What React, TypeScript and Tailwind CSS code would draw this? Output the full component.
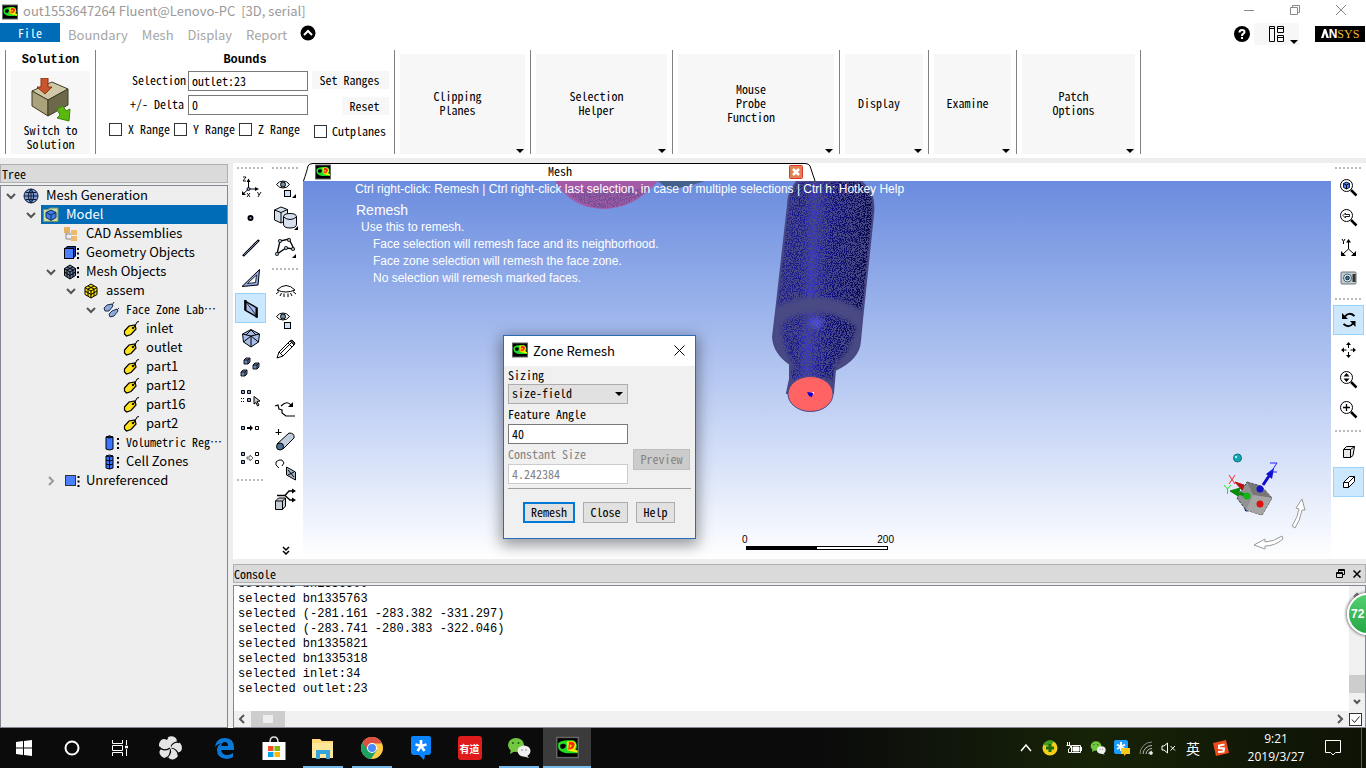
import React from "react";
import clsx from "clsx";

const mono = "font-['Noto_Sans_Mono_CJK_SC','Liberation_Mono',monospace] text-[12px] leading-[14px]";
const boldMono = "font-['Liberation_Mono',monospace] text-[12px] leading-[14px] font-bold";
const sans = "font-['Open_Sans','Noto_Sans_CJK_SC',sans-serif]";
const cjk = "font-['Noto_Sans_CJK_SC',sans-serif]";

/* ---------- small shared drawings ---------- */

function FluentIcon({ size = 16 }: { size?: number }) {
  return (
    <svg width={size} height={size} viewBox="0 0 16 16" className="shrink-0">
      <rect x="0.5" y="1" width="15" height="14" fill="#000" stroke="#666" />
      <path d="M1.500 5Q4 3 8 3H12Q14.500 4 14.500 7L14 9.500L15 10V12H7Q2 11 1.500 8Z" fill="#22dd22" />
      <path d="M7.500 4Q13 2.500 14 6Q13.500 9 12.500 9.500L15 10V11.500L8 10Z" fill="#ffee00" />
      <path d="M9 4Q13 3.500 13 6Q12.500 8.500 11 9L8.500 9.500Z" fill="#f32a12" />
      <path d="M9.500 6Q11 5.500 11 7L9.500 8.500Z" fill="#ffd400" />
      <path d="M3 6Q6 4.500 7 6.500Q6.500 9 4.500 9Q2.500 8.500 3 6Z" fill="#000" />
    </svg>
  );
}

function Caret({ className }: { className?: string }) {
  return (
    <svg width="8" height="4" viewBox="0 0 8 4" className={className}>
      <path d="M0 0H8L4 4Z" fill="#000" />
    </svg>
  );
}

function Grip() {
  return (
    <svg width="27" height="2" viewBox="0 0 27 2">
      <path d="M0 1H27" stroke="#bbb" strokeWidth="2" strokeDasharray="2 2" />
    </svg>
  );
}

/* ---------- ribbon ---------- */

function Ribbon() {
  const groups = [
    { lines: ["Clipping", "Planes"], width: "w-[136px]" },
    { lines: ["Selection", "Helper"], width: "w-[142px]" },
    { lines: ["Mouse", "Probe", "Function"], width: "w-[167px]" },
    { lines: ["Display"], width: "w-[89px]" },
    { lines: ["Examine"], width: "w-[88px]" },
    { lines: ["Patch", "Options"], width: "w-[124px]" },
  ];
  return (
    <div className={clsx("flex h-[108px] pb-1 pl-[5px]", mono)}>
      <section className="flex w-[90px] flex-col border-l border-[#808080] px-[5px]">
        <h2 className={clsx("pt-[3px] pb-1 text-center", boldMono)}>Solution</h2>
        <button className="flex flex-1 flex-col items-center justify-end bg-[#f7f7f7] pb-[3px]">
          <svg width="40" height="44" viewBox="0 0 40 44" className="mb-[1px]">
            <path d="M1 13L21 4L37 11L17 22Z" fill="#cfc8a6" stroke="#3f3b27" />
            <path d="M1 13L17 22V38L1 28Z" fill="#aaa27b" stroke="#3f3b27" />
            <path d="M17 22L37 11V27L17 38Z" fill="#6e684b" stroke="#3f3b27" />
            <path d="M10 0H17V9H21L14 16L6 9H10Z" fill="#c9552c" stroke="#8c3212" />
            <path d="M26 31L32 28L35 33L39 31L38 43L26 40L29 37Z" fill="#5ab80e" stroke="#3b850a" />
          </svg>
          <span>Switch to</span>
          <span>Solution</span>
        </button>
      </section>
      <section className="flex w-[299px] flex-col border-l border-[#808080] pr-[5px]">
        <h2 className={clsx("pt-[3px] pb-1 pl-[5px] text-center", boldMono)}>Bounds</h2>
        <div className="flex items-center">
          <label htmlFor="selection" className="w-[90px] pb-[2px] text-right">Selection</label>
          <input id="selection" defaultValue="outlet:23" className="ml-[2px] h-5 w-[120px] border border-[#7a7a7a] px-[3px] pb-[2px]" />
          <button className="mb-[2px] ml-auto h-[18px] w-[77px] bg-[#f7f7f7] pr-[2px] pb-[1px]">Set Ranges</button>
        </div>
        <div className="mt-1 flex items-center">
          <label htmlFor="delta" className="w-[90px] pr-[2px] pb-[2px] text-right">+/- Delta</label>
          <input id="delta" defaultValue="0" className="ml-[2px] h-5 w-[120px] border border-[#7a7a7a] px-[3px] pb-[2px]" />
          <button className="mt-[2px] ml-auto h-[18px] w-[47px] bg-[#f7f7f7] pr-[2px] pb-[1px]">Reset</button>
        </div>
        <div className="mt-[5px] flex items-center pl-[13px]">
          {["X Range", "Y Range", "Z Range"].map((name) => (
            <label key={name} className="flex w-[65px] items-center gap-[6px] whitespace-nowrap">
              <input type="checkbox" className="size-[13px] shrink-0 appearance-none border border-[#333] bg-white" />
              {name}
            </label>
          ))}
          <label className="mt-1 ml-auto flex items-center gap-[5px] pr-[3px]">
            <input type="checkbox" className="size-[13px] shrink-0 appearance-none border border-[#333] bg-white" />
            Cutplanes
          </label>
        </div>
      </section>
      {groups.map((g) => (
        <section key={g.lines[0]} className={clsx("flex border-l border-[#808080] px-[5px] pt-1", g.width)}>
          <button className="flex flex-1 flex-col bg-[#f7f7f7]">
            <span className="flex w-full flex-1 flex-col items-center justify-center pt-[3px] pr-[10px]">
              {g.lines.map((l) => <span key={l}>{l}</span>)}
            </span>
            <Caret className="mr-[1px] mb-[1px] self-end" />
          </button>
        </section>
      ))}
      <div className="border-l border-[#808080]" />
    </div>
  );
}

function Header() {
  return (
    <header className="bg-white">
      <div className={clsx("flex h-[23px] items-center pl-[2px] text-[13px] text-[#999]", cjk)}>
        <FluentIcon />
        <h1 className="ml-[5px] pb-[1px] whitespace-pre">out1553647264 Fluent@Lenovo-PC  [3D, serial]</h1>
        <div className="ml-auto flex gap-9 pr-5 pb-[3px]">
          <button aria-label="Minimize">
            <svg width="10" height="10"><path d="M0 5.500H10" stroke="#888" /></svg>
          </button>
          <button aria-label="Restore">
            <svg width="10" height="10" fill="none" stroke="#888"><path d="M0.500 2.500H7.500V9.500H0.500ZM2.500 2.500V0.500H9.500V7.500H7.500" /></svg>
          </button>
          <button aria-label="Close window">
            <svg width="10" height="10" stroke="#888"><path d="M0 0L10 10M10 0L0 10" /></svg>
          </button>
        </div>
      </div>
      <div className="flex h-[27px] items-start">
        <button className={clsx("h-[19px] w-[60px] bg-[#006bb7] text-white", mono)}>File</button>
        <nav className={clsx("flex gap-[14px] pt-[3px] pl-2 text-[13px] leading-[18px] text-[#a5a5a5]", cjk)}>
          {["Boundary", "Mesh", "Display", "Report"].map((m) => <a href="#" key={m}>{m}</a>)}
        </nav>
        <button aria-label="Collapse ribbon" className="mt-[2px] ml-[13px]">
          <svg width="16" height="16"><circle cx="8" cy="8" r="7.500" /><path d="M4 10L8 6L12 10" fill="none" stroke="#fff" strokeWidth="2" /></svg>
        </button>
        <div className="ml-auto flex">
          <button aria-label="Help" className="mt-[3px] mr-1 self-start">
            <svg width="16" height="16">
              <circle cx="8" cy="8" r="8" />
              <path d="M5.500 6.500Q5.500 4 8 4T10.500 6Q10.500 7 9 8Q8 8.500 8 10" fill="none" stroke="#fff" strokeWidth="2" />
              <rect x="7" y="11" width="2" height="2" fill="#fff" />
            </svg>
          </button>
          <button aria-label="Layout" className="flex h-[22px] w-[45px] items-end bg-[#f7f7f7] pb-[1px] pl-[15px]">
            <svg width="15" height="16" fill="none" stroke="#000" className="mb-[2px]">
              <path d="M0.500 0.500H5.500V15.500H0.500ZM0.500 2.500H5.500M8.500 0.500H14.500V6.500H8.500ZM8.500 2.500H14.500M8.500 9.500H14.500V15.500H8.500ZM8.500 11.500H14.500" />
            </svg>
            <Caret className="ml-[6px]" />
          </button>
          <div className="mt-[3px] mr-[1px] ml-4 h-4 w-[50px] bg-black text-center font-['Liberation_Sans',sans-serif] text-[12px] leading-4 font-bold text-white">
            <svg width="8" height="9" className="inline align-baseline"><path d="M0 9L3 0H5L8 9H5.500L4 4L2.500 9Z" fill="#fff" /></svg>
            N<span className="font-['Liberation_Serif',serif] font-normal text-[#f0b82c]">SYS</span>
          </div>
        </div>
      </div>
      <Ribbon />
    </header>
  );
}

/* ---------- tree ---------- */

const treeIcons: Record<string, React.ReactNode> = {
  globe: (
    <g fill="none" stroke="#111c33">
      <circle cx="8" cy="8" r="7" fill="#7d9bd8" />
      <path d="M1 8H15M2.500 4.500H13.500M2.500 11.500H13.500M8 1V15M8 1Q2.500 8 8 15M8 1Q13.500 8 8 15" />
    </g>
  ),
  model: (
    <g>
      <path d="M0.500 2.500H5L7 1H15V14.500H0.500Z" fill="#c9dca6" stroke="#7d9660" />
      <path d="M3 5.500L8 3L13 5.500V10.500L8 13.500L3 10.500Z" fill="#3f7fe0" stroke="#102c66" />
      <path d="M3 5.500L8 8L13 5.500M8 8V13" fill="none" stroke="#102c66" />
    </g>
  ),
  cad: (
    <g>
      <path d="M3 7V13H9M3 8H9" fill="none" stroke="#888" />
      <rect x="1" y="1" width="6" height="6" fill="#e5b063" />
      <rect x="8" y="4" width="6" height="5" fill="#edba70" />
      <rect x="8" y="10" width="6" height="5" fill="#edba70" />
    </g>
  ),
  geometry: (
    <g>
      <path d="M1.500 4L4 1.500H12.500V11L10 13.500H1.500Z" fill="#173a9a" stroke="#000" />
      <rect x="1.500" y="3.500" width="9" height="10" fill="#4a80ff" stroke="#000" />
      <path d="M15 3V14" stroke="#000" strokeWidth="2" strokeDasharray="2 2.500" />
    </g>
  ),
  mesh: (
    <g fill="none" stroke="#000">
      <path d="M1.500 4.500L7 1L12.500 4.500V11.500L7 15L1.500 11.500Z" fill="#6b7fa6" />
      <path d="M1.500 4.500L7 8L12.500 4.500M7 8V15M1.500 8L7 11.500L12.500 8M4 3L10 6V13M10 3L4 6V13" />
      <path d="M15 3V14" strokeWidth="2" strokeDasharray="2 2.500" />
    </g>
  ),
  assem: (
    <g fill="none" stroke="#000">
      <path d="M2 4.500L8 1L14 4.500V11.500L8 15L2 11.500Z" fill="#ffe000" />
      <path d="M2 4.500L8 8L14 4.500M8 8V15M2 8L8 11.500L14 8M5 3L11 6V13M11 3L5 6V13" />
    </g>
  ),
  labels: (
    <g fill="#8fa9d8" stroke="#1c2b4d">
      <path d="M1 6L4 3L9 2L10 4L6 9L2 9Z" />
      <path d="M6 12L9 9L14 7L15 9L11 14L7 15Z" />
      <path d="M9 3L11 0M14 8L16 6" />
    </g>
  ),
  tag: (
    <g fill="#ffe21a" stroke="#000">
      <path d="M1.500 10L6 5L12 4L13 8L8 13.500L3.500 15L1.500 13Z" strokeWidth="1.200" />
      <path d="M10.500 7L13 3L14 1L16 0.500" fill="none" />
      <circle cx="10" cy="7" r="0.800" fill="#000" />
    </g>
  ),
  volume: (
    <g stroke="#000">
      <path d="M3 2Q6.500 0 10 2V14Q6.500 16 3 14Z" fill="#3a76ff" />
      <path d="M3 2Q6.500 4 10 2Q6.500 0 3 2Z" fill="#16357d" />
      <path d="M15 3V14" strokeWidth="2" strokeDasharray="2 2.500" />
    </g>
  ),
  cells: (
    <g stroke="#000">
      <path d="M3 2Q6.500 0 10 2V14Q6.500 16 3 14Z" fill="#3a76ff" />
      <path d="M3 2Q6.500 4 10 2M6.500 3V15M3 6Q6.500 8 10 6M3 10Q6.500 12 10 10" fill="none" />
      <path d="M15 3V14" strokeWidth="2" strokeDasharray="2 2.500" />
    </g>
  ),
  square: (
    <g stroke="#333">
      <rect x="2.500" y="2.500" width="10" height="10" fill="#4a80ff" />
      <path d="M15.500 3V14" stroke="#000" strokeWidth="2" strokeDasharray="2 2.500" />
    </g>
  ),
};

type TreeRow = { label: string; level: number; icon: string; open?: boolean; mono?: boolean };

const rows: TreeRow[] = [
  { label: "Mesh Generation", level: 0, icon: "globe", open: true },
  { label: "Model", level: 1, icon: "model", open: true },
  { label: "CAD Assemblies", level: 2, icon: "cad" },
  { label: "Geometry Objects", level: 2, icon: "geometry" },
  { label: "Mesh Objects", level: 2, icon: "mesh", open: true },
  { label: "assem", level: 3, icon: "assem", open: true },
  { label: "Face Zone Lab…", level: 4, icon: "labels", open: true, mono: true },
  { label: "inlet", level: 5, icon: "tag" },
  { label: "outlet", level: 5, icon: "tag" },
  { label: "part1", level: 5, icon: "tag" },
  { label: "part12", level: 5, icon: "tag" },
  { label: "part16", level: 5, icon: "tag" },
  { label: "part2", level: 5, icon: "tag" },
  { label: "Volumetric Reg…", level: 4, icon: "volume", mono: true },
  { label: "Cell Zones", level: 4, icon: "cells" },
  { label: "Unreferenced", level: 2, icon: "square", open: false },
];

const indent = ["pl-0", "pl-5", "pl-10", "pl-15", "pl-20", "pl-25"];

function Tree() {
  return (
    <aside className="flex w-[228px] shrink-0 flex-col">
      <h2 className={clsx("mt-[1px] h-[19px] border border-[#b0b0b0] bg-[#dadada] pt-[2px] pl-[1px]", mono)}>Tree</h2>
      <ul lang="zh-CN" className={clsx("mt-[2px] flex-1 border border-[#828790] text-[13px] leading-[17px]", cjk)}>
        {rows.map((r) => (
          <li key={r.label} className={clsx("flex h-[19px]", indent[r.level])}>
            <span className="flex w-5 shrink-0 items-center justify-center">
              {r.open !== undefined && (
                <svg width="10" height="10" fill="none" strokeWidth="2">
                  {r.open ? <path d="M1 3L5 7L9 3" stroke="#555" /> : <path d="M3 1L7 5L3 9" stroke="#999" />}
                </svg>
              )}
            </span>
            <span className={clsx("flex flex-1 items-center whitespace-nowrap", r.label === "Model" && "bg-[#006bb7] text-white")}>
              <svg width="17" height="16" viewBox="0 0 17 16" className="mr-[6px] ml-[2px] shrink-0">{treeIcons[r.icon]}</svg>
              <span className={clsx("pb-[2px]", r.mono && mono)}>{r.label}</span>
            </span>
          </li>
        ))}
      </ul>
    </aside>
  );
}

/* ---------- tool bars ---------- */

function Tool({ name, active, children }: { name: string; active?: boolean; children: React.ReactNode }) {
  return (
    <button
      aria-label={name}
      className={clsx("flex h-[30px] w-[31px] items-center justify-center", active && "border border-[#99d1ff] bg-[#cce8ff]")}
    >
      <svg width="24" height="24" viewBox="0 0 24 24" fill="none" stroke="#000">{children}</svg>
    </button>
  );
}

const eye = (
  <>
    <path d="M2.500 8.500Q5 5 9 5T15.500 8.500Q13 12 9 12T2.500 8.500Z" />
    <circle cx="9" cy="8.500" r="2.500" fill="#6d8ca8" />
    <rect x="10.500" y="14.500" width="6" height="6" fill="#cfe0f5" />
  </>
);

function LeftTools() {
  return (
    <div className="flex w-[70px] shrink-0 gap-1 bg-white pl-[2px]">
      <div className="flex flex-col items-center">
        <div className="flex h-[10px] items-center"><Grip /></div>
        <Tool name="Axes">
          <path d="M9.500 13V5M9.500 13H18M9.500 13L4 18" />
          <path d="M7.500 6L9.500 2.500L11.500 6ZM16 11L20 13L16 15ZM3 15V19H7Z" fill="#000" stroke="none" />
          <circle cx="9.500" cy="13" r="1.500" fill="#8fa9e8" />
          <path d="M4 1H7L4 5H7M8 17L11 21M11 17L8 21M18.500 16L20 19M22 16L19 21" strokeWidth="0.900" />
        </Tool>
        <Tool name="Node"><circle cx="11.500" cy="12" r="2" fill="#8fa9e8" strokeWidth="2" /></Tool>
        <Tool name="Edge"><path d="M4 20L20 4" strokeWidth="2.400" /><path d="M5 19L19 5" stroke="#8fa9e8" strokeWidth="0.800" /></Tool>
        <Tool name="Face">
          <path d="M3 20.500L20.500 3.500L19 19Z" strokeWidth="1" fill="#8fa9e8" />
          <path d="M8.500 17.500L17.500 9L16.500 16.500Z" fill="#fff" strokeWidth="0.800" />
        </Tool>
        <Tool name="Face zone" active>
          <path d="M6 5L18 12V21L6 14Z" fill="#a7bce8" strokeWidth="1.400" /><path d="M6.500 4V14M17.500 12V21.500" strokeWidth="2" /><path d="M7 6L17 19" strokeWidth="0.800" />
        </Tool>
        <Tool name="Cell">
          <path d="M3.500 8L12 3.500L20.500 8L19.500 16L12 21L4.500 16Z" fill="#a7bce8" /><path d="M3.500 8L12 10L20.500 8M12 10V21M4.500 16L12 10L19.500 16M7 9L12 4L17 9" />
        </Tool>
        <Tool name="Bodies">
          {[[5, 2], [14, 7], [2, 14]].map(([x, y]) => (
            <g key={x} strokeWidth="0.900">
              <path d={`M${x} ${y + 2}L${x + 2} ${y}H${x + 6}V${y + 4}L${x + 4} ${y + 6}H${x}Z`} fill="#6f87b5" />
              <path d={`M${x} ${y + 2}H${x + 4}V${y + 6}M${x + 4} ${y + 2}L${x + 6} ${y}`} />
            </g>
          ))}
        </Tool>
        <Tool name="Select visible">
          <path d="M2.500 4.500H5.500V7.500H2.500ZM8.500 4.500H11.500V7.500H8.500ZM8.500 12.500H11.500V15.500H8.500Z" fill="#8fa9e8" />
          <path d="M2 12.500H6M2 15.500H6" strokeDasharray="1 1" />
          <path d="M15 10.500L21 15L18 15.500L20 19L18.500 20L17 16.500L15 18Z" fill="#ccc" />
        </Tool>
        <Tool name="Move one">
          <path d="M2.500 10.500H5.500V13.500H2.500Z" fill="#8fa9e8" /><path d="M16.500 10.500H19.500V13.500H16.500Z" />
          <path d="M8 12H12" strokeWidth="2" /><path d="M11 9L14 12L11 15Z" fill="#000" stroke="none" />
        </Tool>
        <Tool name="Move many">
          <path d="M2.500 6.500H5.500V9.500H2.500ZM2.500 14.500H5.500V17.500H2.500Z" fill="#8fa9e8" />
          <path d="M16.500 6.500H19.500V9.500H16.500ZM16.500 14.500H19.500V17.500H16.500Z" />
          <path d="M8 11H11V9L14 12L11 15V13H8Z" stroke="#666" />
        </Tool>
        <div className="flex h-[14px] items-center"><Grip /></div>
      </div>
      <div className="flex flex-col items-center">
        <div className="flex h-[10px] items-center"><Grip /></div>
        <Tool name="Visibility">{eye}<path d="M22 18V22H18Z" fill="#000" stroke="none" /></Tool>
        <Tool name="Display style">
          <path d="M0.500 4L7 1L13.500 3.500V14L7 17L0.500 14Z" fill="#d6e0ee" /><path d="M0.500 4L7 6.500L13.500 3.500M7 6.500V17" />
          <path d="M9.500 11Q9.500 7.500 16 7.500T22.500 11V18Q22.500 22 16 22T9.500 18Z" fill="#d6e0ee" /><path d="M9.500 11Q16 16 22.500 11" />
          <path d="M24 20V24H20Z" fill="#000" stroke="none" />
        </Tool>
        <Tool name="Polygon">
          <path d="M3 18L6 5L15 3L20 13L12 12Z" strokeWidth="1.300" />
          {[[3, 18], [6, 5], [15, 4], [19, 13], [12, 12]].map(([x, y]) => <circle key={x} cx={x} cy={y} r="1.700" fill="#8ea5b5" strokeWidth="0.700" />)}
          <path d="M22 18V22H18Z" fill="#000" stroke="none" />
        </Tool>
        <div className="flex h-3 items-center"><Grip /></div>
        <Tool name="Hide"><path d="M3 12Q12 3 21 12Q12 16 3 12M2 16L5 13.500M6 18L7.500 15M10 19V15.500M14 19V15.500M18 18L16.500 15M22 16L19 13.500" /></Tool>
        <Tool name="Show">{eye}</Tool>
        <Tool name="Edit"><path d="M3 20L5 14L16 3L20 7L9 18ZM5 14L9 18M14 5L18 9M7 15L17 5" /><path d="M16 3L18 2L21 5L20 7Z" fill="#555" /></Tool>
        <div className="h-[30px]" />
        <Tool name="Swap edge"><path d="M1 8L4 7L5 11L8 12L8 15L12 18L21 18M7 8Q13 2 17 7" strokeWidth="1.200" /><path d="M19 4V9H14Z" fill="#000" stroke="none" /></Tool>
        <Tool name="Add cylinder">
          <path d="M4.500 1V7M1.500 4.500H7.500" /><path d="M3 16L15 5Q21 5 20 10L9 21Z" fill="#c3cedd" /><circle cx="6" cy="18.500" r="3.500" fill="#4a7096" />
        </Tool>
        <Tool name="Rotate face"><path d="M5 10L2 7V4L5 2H8L10 5L8 8" /><path d="M12.500 9L21.500 14V22L12.500 17Z" fill="#a4b2c5" /><path d="M14 12L20 19M20 14L14 17" /></Tool>
        <Tool name="Split body">
          <path d="M1.500 13L4.500 10H11.500V18L8.500 21.500H1.500ZM1.500 13H8.500V21.500M8.500 13L11.500 10" fill="#c7cdd5" /><path d="M3 7.500H11L15 3H19M11 7.500L16 12H19" strokeWidth="1.300" />
          <path d="M18 0.500L22 3L18 5.500ZM18 9.500L22 12L18 14.500Z" fill="#000" stroke="none" />
        </Tool>
        <button aria-label="More tools" className="mt-auto mb-1">
          <svg width="8" height="9" fill="none" stroke="#000" strokeWidth="1.500"><path d="M1 1L4 4L7 1M1 5L4 8L7 5" /></svg>
        </button>
      </div>
    </div>
  );
}

const lens = <><circle cx="9.500" cy="9.500" r="6" /><path d="M14 14L19.500 19.500" strokeWidth="2.500" /></>;

function RightTools() {
  return (
    <div className="flex w-[35px] shrink-0 flex-col items-center bg-white">
      <div className="flex h-[10px] items-center"><Grip /></div>
      <Tool name="Fit">{lens}<path d="M6.500 7.500L9.500 6L12.500 7.500V11.500L9.500 13L6.500 11.500Z" fill="#4a80ff" stroke="#123" /><path d="M6.500 7.500L9.500 9L12.500 7.500M9.500 9V13" /></Tool>
      <Tool name="Previous view">{lens}<path d="M6 9.500L8.500 7V8.500H12.500V10.500H8.500V12Z" strokeWidth="0.900" /></Tool>
      <Tool name="Axis view">
        <path d="M11.500 13V5M11.500 13L6 18M11.500 13L17 18" /><path d="M9 6.500L11.500 3L14 6.500ZM4 15V20H9ZM19 15V20H14Z" fill="#000" stroke="none" />
        <path d="M5 3L6.500 5.500L8 3M6.500 5.500V8" />
      </Tool>
      <Tool name="Snapshot">
        <rect x="4" y="6" width="15" height="12" rx="1" fill="#c3cbd3" stroke="#68747e" /><path d="M17 8V16" strokeWidth="3" stroke="#333" />
        <circle cx="10.500" cy="12" r="4" fill="#dde8f0" stroke="#466" /><circle cx="10.500" cy="12" r="1.800" fill="#3d7bb6" stroke="#123" />
      </Tool>
      <div className="flex h-3 items-center"><Grip /></div>
      <Tool name="Rotate" active>
        <path d="M8 8.500Q12 3.500 17.500 8M6.500 16Q12 20.500 16 15.500" strokeWidth="2" /><path d="M5 5V11H11ZM18.500 13V19L13 13Z" fill="#000" stroke="none" />
      </Tool>
      <Tool name="Pan">
        <path d="M11.500 5V10M11.500 14V19M5 12H9.500M13.500 12H18" /><path d="M9 7L11.500 4L14 7ZM9 17L11.500 20L14 17ZM7 9.500L4 12L7 14.500ZM16 9.500L19 12L16 14.500Z" fill="#000" stroke="none" />
      </Tool>
      <Tool name="Zoom">{lens}<path d="M6.500 8.500L9.500 5L12.500 8.500ZM6.500 10.500L9.500 14L12.500 10.500Z" fill="#000" stroke="none" /></Tool>
      <Tool name="Zoom in">{lens}<path d="M9.500 6V13M6 9.500H13" strokeWidth="1.300" /></Tool>
      <div className="flex h-3 items-center"><Grip /></div>
      <Tool name="Perspective"><path d="M6.500 9.500L9.500 6.500H17.500L16 15.500L13.500 17.500H6.500ZM6.500 9.500H13.500V17.500M13.500 9.500L17.500 6.500" fill="#e8e8e8" /></Tool>
      <Tool name="Orthographic" active><path d="M6.500 12.500L12.500 6.500H17.500V11.500L11.500 17.500H6.500ZM6.500 12.500H11.500V17.500M11.500 12.500L17.500 6.500" fill="#fff" /></Tool>
    </div>
  );
}

/* ---------- graphics window ---------- */

const bottle = "M494 0L487 12Q485 18 485 24L474 122L470 156Q471 172 487 183L487 198L484 212H530L532 189Q556 178 557 160L559 139L570 34Q572 15 564 7L558 0Z";

function MeshScene() {
  return (
    <svg width="600" height="240" className="absolute top-0 left-0">
      <defs>
        <linearGradient id="metal" x1="0" x2="1" y1="0" y2="0.100">
          <stop offset="0" stopColor="#2b2b8c" />
          <stop offset="0.300" stopColor="#18188f" />
          <stop offset="0.420" stopColor="#3737c4" />
          <stop offset="0.600" stopColor="#0f0f86" />
          <stop offset="1" stopColor="#050542" />
        </linearGradient>
        <filter id="speckle" x="0" y="0" width="1" height="1" colorInterpolationFilters="sRGB">
          <feTurbulence type="fractalNoise" baseFrequency="0.850" numOctaves="2" seed="4" />
          <feColorMatrix values="0 0 0 0 0.280 0 0 0 0 0.280 0 0 0 0 0.520 14 0 0 0 -6.300" />
          <feComposite operator="in" in2="SourceGraphic" />
        </filter>
        <filter id="soft"><feGaussianBlur stdDeviation="2" /></filter>
        <clipPath id="body"><path d={bottle} /></clipPath>
      </defs>
      <path d="M355 0H402Q378 8 365 8Z" fill="#46608c" />
      <path d="M252 0H355Q331 28 300 28Q268 27 252 0Z" fill="#a45aa6" />
      <path d="M262 8H345Q326 27 300 27Q276 26 262 8Z" filter="url(#speckle)" opacity="0.500" />
      <path d={bottle} fill="url(#metal)" />
      <path d={bottle} filter="url(#speckle)" />
      {/* dense rim where the body narrows */}
      <g clipPath="url(#body)">
        <g fill="none" stroke="#484884" filter="url(#soft)">
          <path d="M468 142Q482 124 516 124Q550 126 564 148" strokeWidth="16" />
          <path d="M471 145Q474 176 488 190M560 145Q552 182 532 190" strokeWidth="14" />
          <path d="M484 204H532" strokeWidth="12" />
        </g>
      </g>
      <ellipse cx="514" cy="142" rx="7" ry="6" fill="#5b5bea" opacity="0.600" filter="url(#soft)" />
      <path d={bottle} fill="none" stroke="#484884" strokeWidth="2" />
      <ellipse cx="507.500" cy="213" rx="22.500" ry="17.500" fill="#ff6363" stroke="#484884" />
      <path d="M504 211L510 212L509 216L506 215Z" fill="#0000dd" />
      <path d="M509 211H511V213Z" fill="#fff" />
    </svg>
  );
}

function Triad() {
  return (
    <svg width="90" height="100" viewBox="0 0 90 100" className="absolute right-5 bottom-2">
      <circle cx="16.500" cy="7" r="4" fill="#14a5ad" stroke="#08767d" />
      <circle cx="15" cy="6" r="1.200" fill="#9ff" />
      <circle cx="26" cy="58" r="2.500" fill="#00208a" />
      <path d="M26 31L40 35L51 47L41 64L25 59L16 47Z" fill="#929292" stroke="#444" strokeDasharray="3 1" />
      <path d="M26 31L40 35L51 47L32 44Z" fill="#777" />
      <path d="M32 44L51 47L41 64L25 59Z" fill="#a5a5a5" />
      <path d="M42 34L48 25" stroke="#1010cc" strokeWidth="3" />
      <path d="M45 23L53 17L51 28Z" fill="#1010cc" />
      <path d="M14 31L23 34L21 39Z" fill="#b81010" stroke="#b81010" />
      <path d="M9 40L19 37L17 45Z" fill="#0a8a0a" stroke="#0a8a0a" />
      <path d="M18 42L26 45" stroke="#0a8a0a" strokeWidth="3" />
      <circle cx="39" cy="38" r="3.500" fill="#1313c8" />
      <circle cx="26" cy="45" r="3.500" fill="#12b512" />
      <circle cx="39" cy="53" r="3.500" fill="#d11" />
      <path d="M49 12H56L50 21H56" fill="none" stroke="#22f" />
      <path d="M8 24L14 33M14 24L8 33" stroke="#f22" />
      <path d="M3 34L6.500 38L10 34M6.500 38V43" fill="none" stroke="#1e1" />
      <path d="M71 75Q77 66 78 58L75 57L81 48L84 59L81 59Q79 70 74 77Z" fill="#fff" stroke="#999" />
      <path d="M61 85Q52 91 44 91V88L33 94L44 98V95Q54 95 62 88Z" fill="#fff" stroke="#999" />
    </svg>
  );
}

function ZoneRemesh() {
  return (
    <div role="dialog" aria-label="Zone Remesh" className="absolute top-[154px] left-[200px] flex h-[204px] w-[193px] flex-col border border-[#2a6cb8] bg-[#f0f0f0] text-black shadow-[0_4px_14px_2px_rgba(0,0,0,0.4)]">
      <div className={clsx("flex h-[30px] items-center bg-white pr-[10px] pb-[2px] pl-2 text-[13px]", cjk)}>
        <FluentIcon />
        <h2 className="ml-[5px]">Zone Remesh</h2>
        <button aria-label="Close dialog" className="ml-auto">
          <svg width="11" height="11" stroke="#000"><path d="M0.500 0.500L10.500 10.500M10.500 0.500L0.500 10.500" /></svg>
        </button>
      </div>
      <form className={clsx("flex flex-1 flex-col px-1 pt-[2px]", mono)}>
        <label htmlFor="sizing">Sizing</label>
        <div className="relative mt-[2px] w-[120px]">
          <select id="sizing" className="block h-5 w-full appearance-none border border-[#adadad] bg-[#e1e1e1] px-[3px] pb-[2px]">
            <option>size-field</option>
          </select>
          <Caret className="pointer-events-none absolute top-2 right-[5px]" />
        </div>
        <label htmlFor="angle" className="mt-[3px]">Feature Angle</label>
        <input id="angle" defaultValue="40" className="mt-[3px] h-5 w-[120px] border border-[#7a7a7a] bg-white px-[3px] pb-[2px]" />
        <div className="mt-[3px] flex items-center justify-between pr-[1px]">
          <div className="flex flex-col text-[#838383]">
            <label htmlFor="constant">Constant Size</label>
            <input id="constant" disabled defaultValue="4.242384" className="mt-[3px] h-5 w-[120px] border border-[#ccc] bg-white px-[3px] pb-[2px]" />
          </div>
          <button disabled type="button" className="mb-3 h-[21px] w-[57px] border border-[#bfbfbf] bg-[#ccc] pb-[1px] text-[#838383]">Preview</button>
        </div>
        <hr className="mt-1 border-[#a0a0a0]" />
        <div className="mt-[13px] flex gap-2 pl-[15px]">
          <button type="button" className="h-[21px] w-[52px] border-2 border-[#0078d7] bg-[#e1e1e1] pb-[1px]">Remesh</button>
          <button type="button" className="h-[21px] w-[45px] border border-[#adadad] bg-[#e1e1e1] pb-[1px]">Close</button>
          <button type="button" className="h-[21px] w-[39px] border border-[#adadad] bg-[#e1e1e1] pb-[1px]">Help</button>
        </div>
      </form>
    </div>
  );
}

function GraphicsWindow() {
  return (
    <div className="flex min-w-0 flex-1 flex-col">
      <div className="flex h-[18px] bg-white">
        <svg width="10" height="18" fill="none" stroke="#000"><path d="M0.500 18Q4 8 5 3Q6 0.500 10 0.500" /></svg>
        <div className={clsx("flex w-[492px] items-start border-t border-black pl-[2px]", mono)}>
          <FluentIcon />
          <span className="flex-1 text-center">Mesh</span>
          <button aria-label="Close tab" className="mt-[1px] mr-[2px]">
            <svg width="14" height="14"><rect x="0.500" y="0.500" width="13" height="13" rx="1" fill="#e28254" stroke="#d8372b" /><path d="M4 4L10 10M10 4L4 10" stroke="#fff" strokeWidth="2.500" /></svg>
          </button>
        </div>
        <svg width="16" height="18" fill="none" stroke="#000"><path d="M0 0.500Q4 0.500 5 3L10 18" /></svg>
      </div>
      <div className="relative flex-1 overflow-hidden bg-linear-to-b from-[#6b8cde] to-white pl-[52px] font-['Liberation_Sans',sans-serif] text-[12px] leading-[17px] text-white">
        <MeshScene />
        <div className="relative">
          <p>Ctrl right-click: Remesh | Ctrl right-click last selection, in case of multiple selections | Ctrl h: Hotkey Help</p>
          <p className="pt-[3px] pl-[1px] text-[14px] leading-[18px]">Remesh</p>
          <p className="pl-[6px]">Use this to remesh.</p>
          <p className="pl-[18px]">Face selection will remesh face and its neighborhood.</p>
          <p className="pl-[18px]">Face zone selection will remesh the face zone.</p>
          <p className="pl-[18px]">No selection will remesh marked faces.</p>
        </div>
        <div className="absolute bottom-[9px] left-[439px] text-[10px] leading-[12px] text-black">
          <div className="flex w-[152px] justify-between"><span>0</span><span>200</span></div>
          <div className="ml-1 flex h-1 w-[142px] border border-black bg-white"><div className="w-1/2 bg-black" /></div>
        </div>
        <Triad />
        <ZoneRemesh />
      </div>
    </div>
  );
}

/* ---------- console ---------- */

const log = [
  "selected bn1336500",
  "selected bn1335763",
  "selected (-281.161 -283.382 -331.297)",
  "selected (-283.741 -280.383 -322.046)",
  "selected bn1335821",
  "selected bn1335318",
  "selected inlet:34",
  "selected outlet:23",
];

function Console() {
  return (
    <section className="relative mt-[5px]">
      <div className={clsx("flex h-[19px] items-center border border-[#b0b0b0] bg-[#dadada] pr-1", mono)}>
        <h2>Console</h2>
        <button aria-label="Float console" className="mr-2 ml-auto">
          <svg width="9" height="9" fill="none" stroke="#000"><path d="M2.500 3V0.500H8.500V5.500H6M2.500 1.500H8.500M0.500 3.500H6.500V8.500H0.500ZM0.500 4.500H6.500" /></svg>
        </button>
        <button aria-label="Close console"><svg width="8" height="8" stroke="#000" strokeWidth="1.500"><path d="M0.500 0.500L7.500 7.500M7.500 0.500L0.500 7.500" /></svg></button>
      </div>
      <div className="mt-[2px] flex h-[143px] flex-col border border-[#828790] bg-white">
        <div className="flex min-h-0 flex-1">
          <div className="flex flex-1 flex-col justify-end overflow-hidden pb-[14px] pl-1 font-['Liberation_Mono',monospace] text-[12px] leading-[15px]">
            {log.map((l) => <p key={l} className="shrink-0">{l}</p>)}
          </div>
          <div className="flex w-4 flex-col items-center bg-[#f0f0f0]">
            <svg width="8" height="6" fill="none" stroke="#555" strokeWidth="2" className="mt-[6px]"><path d="M1 5L4 2L7 5" /></svg>
            <div className="mt-auto mb-[6px] h-[18px] w-full bg-[#cdcdcd]" />
            <svg width="8" height="6" fill="none" stroke="#555" strokeWidth="2" className="mb-[6px]"><path d="M1 1L4 4L7 1" /></svg>
          </div>
        </div>
        <div className="flex h-4 items-center bg-[#f0f0f0]">
          <svg width="17" height="10" fill="none" stroke="#555" strokeWidth="2"><path d="M10 1L6 5L10 9" /></svg>
          <div className="flex h-full w-[34px] items-center justify-center bg-[#cdcdcd]"><div className="h-2 w-[10px] bg-[#eee]" /></div>
          <svg width="10" height="10" fill="none" stroke="#555" strokeWidth="2" className="ml-auto"><path d="M2 1L6 5L2 9" /></svg>
          <label className="relative mr-[3px] ml-[3px] size-[13px]">
            <input type="checkbox" defaultChecked aria-label="Follow output" className="block size-[13px] appearance-none border border-[#333] bg-white" />
            <svg width="13" height="13" fill="none" stroke="#222" className="absolute inset-0"><path d="M3 6.500L5.500 9.500L10.500 3.500" /></svg>
          </label>
        </div>
      </div>
      <div className="absolute top-[26px] right-0 h-12 w-[22px] overflow-hidden py-[3px] pl-[3px]">
        <div className="flex size-[42px] items-center rounded-full border-2 border-white bg-linear-to-b from-[#52d070] to-[#25a645] pl-[2px] font-['Liberation_Sans',sans-serif] text-[12px] font-bold text-white shadow-[0_0_3px_1px_#777]">72</div>
      </div>
    </section>
  );
}

/* ---------- task bar ---------- */

const wechat = (
  <>
    <ellipse cx="9" cy="9" rx="8" ry="7" fill="#72c740" />
    <path d="M4 13L3 18L8 15Z" fill="#72c740" />
    <ellipse cx="17" cy="15" rx="6.500" ry="5.500" fill="#f0f0f0" />
    <path d="M19 18L22 22L16 20Z" fill="#f0f0f0" />
    <g fill="#245a12"><circle cx="6" cy="7" r="1" /><circle cx="11.500" cy="7" r="1" /></g>
    <g fill="#777"><circle cx="15" cy="14" r="0.800" /><circle cx="19" cy="14" r="0.800" /></g>
  </>
);

const pinned: { name: string; open?: boolean; art: React.ReactNode }[] = [
  { name: "Edge", art: <path d="M2 11Q3 2 12 2Q21 2 21 12V14H8Q9 19 14 19Q18 19 20 17V21Q17 23 13 23Q4 22 4 14Q4 9 9 7Q4 8 2 11ZM8 10H15Q15 6 12 6T8 10Z" fill="#0a78d7" /> },
  {
    name: "Store",
    art: <><path d="M0.500 6H23.500V24H0.500Z" fill="#fff" /><path d="M8 6Q8 1 12 1T16 6" fill="none" stroke="#ddd" strokeWidth="1.500" /><path d="M6 10H11.500V15H6Z" fill="#f25022" /><path d="M12.500 10H18V15H12.500Z" fill="#7fba00" /><path d="M6 16H11.500V21H6Z" fill="#00a4ef" /><path d="M12.500 16H18V21H12.500Z" fill="#ffb900" /></>,
  },
  {
    name: "Explorer", open: true,
    art: <><path d="M1 3H9L11 5H22V22H1Z" fill="#ffd976" /><path d="M1 7H22V22H1Z" fill="#ffe79a" /><path d="M5 14H19V23H15V18H9V23H5Z" fill="#35a3dc" /></>,
  },
  {
    name: "Chrome", open: true,
    art: <><circle cx="12" cy="12" r="11" fill="#fc4" /><path d="M12 12L2.500 6.500A11 11 0 0 0 11 23L17 14Z" fill="#1da261" /><path d="M12 12H6L2.500 6.500A11 11 0 0 1 22 7.500H12Z" fill="#dd5144" /><circle cx="12" cy="12" r="5" fill="#fff" /><circle cx="12" cy="12" r="4" fill="#4c8bf5" /></>,
  },
  {
    name: "Cloud", art: <><path d="M4 0H20Q22 0 22 2V16Q22 19 19 19H16L15 24L10 19H5Q2 19 2 16V2Q2 0 4 0Z" fill="#0a84ff" /><path d="M12 4V10M6.500 8.500L12 10L17.500 8.500M8.500 15L12 10L15.500 15" fill="none" stroke="#fff" strokeWidth="2.600" /></>,
  },
  { name: "Youdao", art: <rect width="24" height="24" rx="3" fill="#e01b1b" /> },
  { name: "WeChat", open: true, art: wechat },
];

const petal = "M12 12C8 9 8 2 13 1.500C19 1.500 19.500 7 12 12Z";

function TaskBar() {
  return (
    <footer className={clsx("flex h-10 items-stretch bg-linear-to-r from-[#0b0b0b] from-60% via-[#162306] via-80% to-[#0e1206] text-white", sans)}>
      <button aria-label="Start" className="flex w-12 items-center justify-center">
        <svg width="16" height="16" fill="#fff"><path d="M0 2L7 1V7.500H0ZM8 1L16 0V7.500H8ZM0 8.500H7V15L0 14ZM8 8.500H16V16L8 15Z" /></svg>
      </button>
      <button aria-label="Search" className="flex w-12 items-center justify-center">
        <svg width="16" height="16" fill="none" stroke="#fff" strokeWidth="2"><circle cx="8" cy="8" r="6.500" /></svg>
      </button>
      <button aria-label="Task view" className="flex w-12 items-center justify-center">
        <svg width="16" height="16" fill="none" stroke="#fff"><path d="M0.500 0V3.500H10.500V0M0.500 16V12.500H10.500V16M0.500 5.500H10.500V10.500H0.500ZM14.500 0V5M14.500 9V16" /><path d="M13 7H16" strokeWidth="2.500" /></svg>
      </button>
      <button aria-label="Petals" className="flex w-14 items-center justify-center pr-1">
        <svg width="24" height="24" fill="#e4e4e4" stroke="#0b0b0b" strokeWidth="0.600">
          {[0, 72, 144, 216, 288].map((a) => (
            <g key={a} transform={`rotate(${a} 12 12)`}>
              <path d={petal} stroke="#e4e4e4" strokeWidth="2.500" />
              <path d="M12 12C7.500 9 7.500 3 10 1.500" fill="none" strokeWidth="1.200" />
            </g>
          ))}
        </svg>
      </button>
      {pinned.map((p) => (
        <button key={p.name} aria-label={p.name} className="relative flex w-[49px] items-center justify-center">
          <svg width="24" height="24" viewBox="0 0 24 24">{p.art}</svg>
          {p.name === "Youdao" && <span className={clsx("absolute text-[10px] font-bold", cjk)}>有道</span>}
          {p.open && <span className="absolute bottom-0 h-[2px] w-10 bg-[#76b9ed]" />}
        </button>
      ))}
      <button aria-label="Fluent" className="flex w-12 items-center justify-center border-b-2 border-[#76b9ed] bg-[#3b3b3b]">
        <FluentIcon size={23} />
      </button>
      <div className="ml-auto flex items-center">
        <svg width="12" height="8" fill="none" stroke="#fff" strokeWidth="1.500"><path d="M1 7L6 1L11 7" /></svg>
        <svg width="16" height="16" className="ml-[10px]"><circle cx="8" cy="8" r="7.500" fill="#f3cf1a" /><path d="M1 5A7.500 7.500 0 0 1 12 1.500L8 6Z" fill="#3d9c21" /><path d="M8 4V12M4 8H12" stroke="#176b12" strokeWidth="3" /></svg>
        <svg width="16" height="12" fill="none" stroke="#fff" className="ml-2"><path d="M5.500 3.500H14.500V10.500H5.500ZM15.500 5V9M1.500 0V3M3.500 0V3M0.500 3.500H4.500V5.500L2.500 7V10.500H5" /><path d="M7 5H13V9H7Z" fill="#fff" /></svg>
        <svg width="16" height="16" viewBox="0 0 24 24" className="ml-2">{wechat}</svg>
        <svg width="16" height="16" className="ml-2"><rect width="14" height="14" rx="2" fill="#1a9bff" /><path d="M7 2V11M3 4.500L11 9M11 4.500L3 9" stroke="#fff" strokeWidth="2" /><path d="M7 8H16V14H12L10 16V14H7Z" fill="#f6c81c" /></svg>
        <svg width="14" height="14" fill="none" stroke="#bbb" className="ml-[9px]"><path d="M1 13A12 12 0 0 1 13 1" stroke="#888" /><path d="M4 13A9 9 0 0 1 13 4.500M7 13A6 6 0 0 1 13 7.500M9.500 13A4 4 0 0 1 13 10" /><circle cx="12" cy="12" r="1.500" fill="#fff" /></svg>
        <svg width="16" height="12" fill="none" stroke="#fff" className="ml-2"><path d="M1 4H3L6.500 1V11L3 8H1ZM9.500 4L14 8.500M14 4L9.500 8.500" /></svg>
        <span className={clsx("ml-[9px] text-[14px]", cjk)}>英</span>
        <svg width="16" height="16" className="ml-[13px]"><path d="M0 3L13 0L16 13L3 16Z" fill="#ee4a16" /><path d="M11.500 4.500L6 5.500V8L11 8.500L10.500 11.500L5 12" fill="none" stroke="#fff" strokeWidth="2" /></svg>
        <div className="ml-4 w-[62px] text-center text-[12px] leading-[18px]">
          <p>9:21</p>
          <p>2019/3/27</p>
        </div>
        <button aria-label="Notifications" className="ml-[18px]">
          <svg width="16" height="16" fill="none" stroke="#fff"><path d="M0.500 0.500H15.500V12.500H10.500L8 15L5.500 12.500H0.500Z" /></svg>
        </button>
        <div className="mr-1 ml-5 h-10 w-px bg-[#5a5a5a]" />
      </div>
    </footer>
  );
}

export default function App() {
  return (
    <div className="flex min-h-screen flex-col overflow-hidden bg-[#eee] text-black">
      <Header />
      <main className="mt-[5px] flex flex-1">
        <Tree />
        <div className="ml-[5px] flex min-w-0 flex-1 flex-col">
          <div className="flex flex-1">
            <LeftTools />
            <GraphicsWindow />
            <RightTools />
          </div>
          <Console />
        </div>
      </main>
      <TaskBar />
    </div>
  );
}
